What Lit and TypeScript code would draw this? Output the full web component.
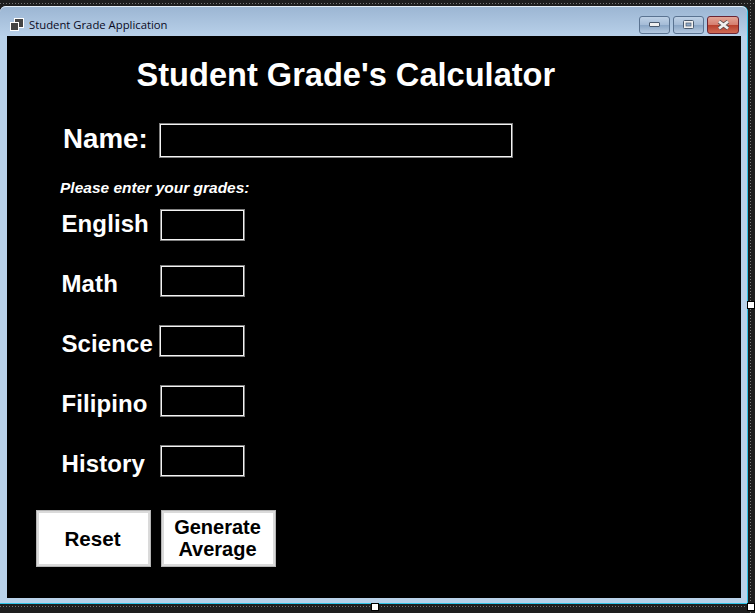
import { LitElement, html, css } from "lit";
import { customElement } from "lit/decorators.js";

const GRADES = [
  { label: "English", cls: "first" },
  { label: "Math", cls: "" },
  { label: "Science", cls: "wide" },
  { label: "Filipino", cls: "" },
  { label: "History", cls: "" },
];

@customElement("app-root")
export class AppRoot extends LitElement {
  static styles = css`
    :host { display: block; position: relative; width: 755px; height: 613px; overflow: hidden; background: #1e1e1e; font-family: "Liberation Sans", Arial, sans-serif; }
    .dots-h, .dots-v { position: absolute; }
    .dots-top { left: 0; right: 0; top: 3px; height: 1px; background: repeating-linear-gradient(90deg, #777 0 1px, transparent 1px 3px); }
    .dots-bottom { left: 0; right: 0; top: 606px; height: 1px; background: repeating-linear-gradient(90deg, #777 0 1px, transparent 1px 3px); }
    .dots-right { top: 0; bottom: 0; left: 750px; width: 1px; background: repeating-linear-gradient(180deg, #777 0 1px, transparent 1px 3px); }
    .handle { position: absolute; width: 6px; height: 6px; background: #fff; border: 1px solid #000; }
    .h-right { left: 747px; top: 301px; }
    .h-bottom { left: 371px; top: 603px; }
    .h-corner { left: 747px; top: 603px; }
    .window { width: 748px; height: 598px; margin-top: 6px; box-sizing: border-box; display: flex; flex-direction: column; border-radius: 6px 6px 0 0; background: #b9d2ea; border-bottom: 1px solid #2fc4e8; border-right: 1px solid #2fc4e8; }
    .titlebar { height: 30px; flex: none; display: flex; align-items: center; padding: 6px 8px 0 10px; gap: 5px; border-radius: 6px 6px 0 0; background: linear-gradient(180deg, #9cb6d3 0%, #b8d0e9 100%); border-top: 1px solid #e4eef8; box-sizing: border-box; }
    .app-icon { width: 14px; height: 13px; flex: none; }
    .title { font-family: "Open Sans", sans-serif; font-size: 11.3px; color: #0a0a1e; flex: 1; }
    .controls { display: flex; gap: 3px; }
    .ctl { width: 31px; height: 18px; box-sizing: border-box; border: 1px solid #5a7391; border-radius: 3px; background: linear-gradient(180deg, #bed1e6 0%, #a5bcd7 48%, #8aa6c6 52%, #b4c9e0 100%); display: flex; align-items: center; justify-content: center; }
    .ctl.close { width: 32px; border-color: #6a2433; background: linear-gradient(180deg, #e3a596 0%, #d67f70 48%, #b8402c 52%, #cf6a55 100%); }
    .form { margin: 0 6px 5px 7px; flex: 1; background: #000; color: #fff; display: flex; flex-direction: column; min-height: 0; }
    h1 { margin: 19px 0 0 129.5px; font-size: 32.6px; line-height: 40px; font-weight: 700; white-space: nowrap; }
    .name-row { display: flex; align-items: center; margin: 28px 0 0 56px; height: 34px; }
    .name-row label { font-size: 27.7px; font-weight: 700; width: 96px; line-height: 30px; margin-top: -2px; }
    .name-row .box { width: 354px; height: 35px; }
    .box { box-sizing: border-box; background: #000; border: 1px solid #808080; box-shadow: inset 0 0 0 1px #f4f4f4; display: block; }
    .hint { margin: 21px 0 0 53px; font-size: 15.5px; line-height: 20px; font-weight: 700; font-style: italic; }
    .grades { display: flex; flex-direction: column; gap: 30px; margin: 11px 0 0 54.5px; }
    .grade { display: flex; align-items: flex-start; height: 30px; }
    .grade label { font-size: 24px; font-weight: 700; width: 98.5px; line-height: 30px; white-space: nowrap; letter-spacing: 0.1px; }
    .grade .box { width: 85px; height: 32px; margin-top: -4px; }
    .grade.first .box { margin-top: 0; }
    .grade.wide .box { width: 86px; margin-left: -1px; }
    .buttons { display: flex; gap: 10px; margin: 31px 0 0 29px; }
    .btn { box-sizing: border-box; width: 115px; height: 57px; background: #fff; border: 3px solid #dadada; outline: 1px solid #b4b4b4; outline-offset: -1px; color: #000; font: 700 20px/22px "Liberation Sans", Arial, sans-serif; padding: 0 2px 2px 0; text-align: center; }
    .btn.reset { font-size: 20.6px; padding-bottom: 0; }
  `;

  render() {
    return html`
      <div class="dots-h dots-top"></div>
      <div class="dots-h dots-bottom"></div>
      <div class="dots-v dots-right"></div>
      <div class="window">
        <div class="titlebar">
          <svg class="app-icon" viewBox="0 0 14 13">
            <rect x="4.500" y="0.500" width="9" height="9" fill="#444" stroke="#fff"/>
            <rect x="0.500" y="4.500" width="8" height="8" fill="#444" stroke="#fff"/>
          </svg>
          <span class="title">Student Grade Application</span>
          <div class="controls">
            <div class="ctl"><svg width="11" height="5" viewBox="0 0 11 5"><rect x="0.5" y="0.5" width="10" height="4" rx="0.5" fill="#f0f0f0" stroke="#4a5a6e"/></svg></div>
            <div class="ctl"><svg width="11" height="9" viewBox="0 0 11 9"><rect x="0.5" y="0.5" width="10" height="8" rx="1" fill="#f0f0f0" stroke="#4a5a6e"/><rect x="3" y="3" width="5" height="3" fill="#8fa9c8" stroke="#4a5a6e" stroke-width="0.7"/></svg></div>
            <div class="ctl close"><svg width="13" height="10" viewBox="0 0 13 10"><path d="M2 1.500 11 8.500M11 1.500 2 8.500" fill="none" stroke="#5a4a4a" stroke-width="4.200"/><path d="M2 1.500 11 8.500M11 1.500 2 8.500" fill="none" stroke="#f0f0f0" stroke-width="2.800"/></svg></div>
          </div>
        </div>
        <div class="form">
          <h1>Student Grade's Calculator</h1>
          <div class="name-row"><label>Name:</label><div class="box"></div></div>
          <div class="hint">Please enter your grades:</div>
          <div class="grades">
            ${GRADES.map((g) => html`<div class="grade ${g.cls}"><label>${g.label}</label><div class="box"></div></div>`)}
          </div>
          <div class="buttons">
            <button class="btn reset">Reset</button>
            <button class="btn">Generate<br />Average</button>
          </div>
        </div>
      </div>
      <div class="handle h-right"></div>
      <div class="handle h-bottom"></div>
      <div class="handle h-corner"></div>
    `;
  }
}
